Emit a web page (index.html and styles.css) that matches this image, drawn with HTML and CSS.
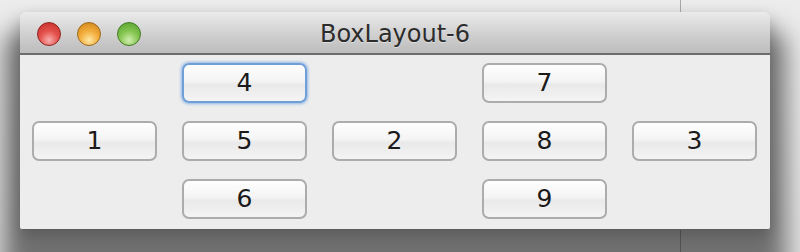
FILE: index.html
```html
<!DOCTYPE html>
<html lang="en">
<head>
    <meta charset="UTF-8">
    <title>BoxLayout-6</title>
    <link rel="stylesheet" href="styles.css">
</head>
<body>
    <div class="window">
        <div class="titlebar">
            <div class="lights">
                <span class="light close"></span>
                <span class="light minimize"></span>
                <span class="light zoom"></span>
            </div>
            <div class="title">BoxLayout-6</div>
            <div></div>
        </div>
        <div class="content">
            <div class="column">
                <button>1</button>
            </div>
            <div class="column">
                <button class="focused">4</button>
                <button>5</button>
                <button>6</button>
            </div>
            <div class="column">
                <button>2</button>
            </div>
            <div class="column">
                <button>7</button>
                <button>8</button>
                <button>9</button>
            </div>
            <div class="column">
                <button>3</button>
            </div>
        </div>
    </div>
</body>
</html>
```

FILE: styles.css
```css
html, body {
    margin: 0;
    height: 252px;
}
body {
    font-family: "DejaVu Sans", sans-serif;
    background:
        linear-gradient(to right, transparent 680px, #a9a9a9 680px, #a9a9a9 681px, transparent 681px),
        linear-gradient(#ececec, #e2e2e2);
    padding-top: 12px;
    box-sizing: border-box;
    overflow: hidden;
}
.window {
    width: 750px;
    margin-left: 20px;
    border-radius: 6px 6px 3px 3px;
    box-shadow: 0 34px 24px 16px rgba(0,0,0,0.5), 0 6px 16px rgba(0,0,0,0.2);
}
.titlebar {
    height: 41px;
    display: grid;
    grid-template-columns: 1fr auto 1fr;
    align-items: center;
    border-radius: 6px 6px 0 0;
    background: linear-gradient(#ebebeb, #d2d2d2 50%, #bcbcbc);
    border-bottom: 2px solid #6c6c6c;
}
.lights {
    display: flex;
    gap: 16px;
    padding-left: 17px;
    padding-top: 2px;
}
.light {
    width: 22px;
    height: 22px;
    border-radius: 50%;
    border: 1px solid;
}
.close {
    background: radial-gradient(circle at 50% 78%, #f7aeac 0, #e4524d 45%, #c22a25 100%);
    border-color: #8f2320;
}
.minimize {
    background: radial-gradient(circle at 50% 78%, #fde7a6 0, #f3ae3c 45%, #cc8117 100%);
    border-color: #9c6818;
}
.zoom {
    background: radial-gradient(circle at 50% 78%, #d0eeae 0, #86c552 45%, #52a02b 100%);
    border-color: #427b22;
}
.title {
    font-size: 24px;
    color: #2c2c2c;
    text-shadow: 0 1px 0 rgba(255,255,255,0.45);
    padding-top: 2px;
}
.content {
    height: 175px;
    box-sizing: border-box;
    padding: 8px 13px 11px 12px;
    display: flex;
    gap: 25px;
    align-items: center;
    border-radius: 0 0 3px 3px;
    background: #ededed;
    border-bottom: 1px solid #5c5c5c;
}
.column {
    display: flex;
    flex-direction: column;
    gap: 18px;
}
button {
    width: 125px;
    height: 40px;
    border: 2px solid #acacac;
    border-radius: 7px;
    background: linear-gradient(#fefefe, #f4f4f4 45%, #e9e9e9 55%, #f4f4f4);
    font-family: "DejaVu Sans", sans-serif;
    font-size: 25px;
    color: #1a1a1a;
    padding: 0;
}
button.focused {
    border-color: #6f9fd6;
    box-shadow: 0 0 3px 1px #8db5e5;
}
```
